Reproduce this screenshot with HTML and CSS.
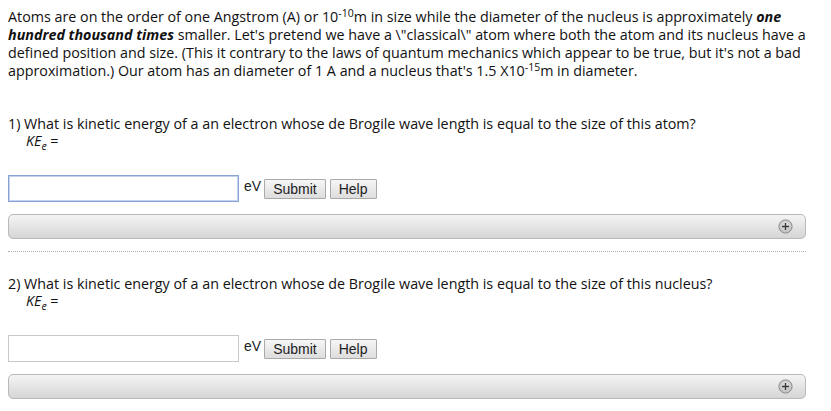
FILE: index.html
```html
<!DOCTYPE html>
<html>
<head>
<meta charset="utf-8">
<link rel="stylesheet" href="styles.css">
</head>
<body>
<div class="page">
  <p class="intro">Atoms are on the order of one Angstrom (A) or 10<sup>-10</sup>m in size while the diameter of the nucleus is approximately <b><i>one hundred thousand times</i></b> smaller. Let's pretend we have a \"classical\" atom where both the atom and its nucleus have a defined position and size. (This it contrary to the laws of quantum mechanics which appear to be true, but it's not a bad approximation.) Our atom has an diameter of 1 A and a nucleus that's 1.5 X10<sup>-15</sup>m in diameter.</p>

  <div class="question q1">
    <div class="qtext">1) What is kinetic energy of a an electron whose de Brogile wave length is equal to the size of this atom?</div>
    <div class="var"><i>KE<sub>e</sub></i> =</div>
    <div class="answer">
      <input class="field focused" type="text">
      <span class="unit">eV</span>
      <button class="btn">Submit</button>
      <button class="btn">Help</button>
    </div>
    <div class="bar"><span class="plus"><svg width="15" height="15" viewBox="0 0 15 15"><defs><radialGradient id="g1" cx="50%" cy="40%" r="60%"><stop offset="0" stop-color="#e6e6e6"/><stop offset="1" stop-color="#bdbdbd"/></radialGradient></defs><circle cx="7.5" cy="7.5" r="6.6" fill="url(#g1)" stroke="#8c8c8c" stroke-width="1"/><path d="M7.5 4V11M4 7.5H11" stroke="#3a3a3a" stroke-width="1.4"/></svg></span></div>
  </div>

  <div class="sep"></div>

  <div class="question q2">
    <div class="qtext">2) What is kinetic energy of a an electron whose de Brogile wave length is equal to the size of this nucleus?</div>
    <div class="var"><i>KE<sub>e</sub></i> =</div>
    <div class="answer">
      <input class="field" type="text">
      <span class="unit">eV</span>
      <button class="btn">Submit</button>
      <button class="btn">Help</button>
    </div>
    <div class="bar"><span class="plus"><svg width="15" height="15" viewBox="0 0 15 15"><defs><radialGradient id="g2" cx="50%" cy="40%" r="60%"><stop offset="0" stop-color="#e6e6e6"/><stop offset="1" stop-color="#bdbdbd"/></radialGradient></defs><circle cx="7.5" cy="7.5" r="6.6" fill="url(#g2)" stroke="#8c8c8c" stroke-width="1"/><path d="M7.5 4V11M4 7.5H11" stroke="#3a3a3a" stroke-width="1.4"/></svg></span></div>
  </div>
</div>
</body>
</html>
```

FILE: styles.css
```css
html, body {
  margin: 0;
  padding: 0;
  background: #fff;
}
.page {
  padding: 8px 25px 0 8px;
  font-family: "Open Sans", sans-serif;
  font-size: 14.3px;
  color: #111;
}
.intro {
  margin: 0;
  line-height: 18px;
}
.intro sup {
  font-size: 10.5px;
  line-height: 0;
  vertical-align: 5px;
}
.q1 {
  padding-top: 35px;
}
.q2 {
  padding-top: 23px;
}
.qtext {
  line-height: 17px;
}
.var {
  padding-left: 18px;
  line-height: 17px;
}
.var sub {
  font-size: 10.5px;
  line-height: 0;
}
.answer {
  margin-top: 26px;
  display: flex;
  align-items: center;
  gap: 4px;
  height: 27px;
}
.field {
  box-sizing: border-box;
  width: 231px;
  height: 27px;
  margin: 0;
  border: 1px solid #c8c8c8;
  outline: none;
  padding: 0 4px;
  font-size: 13px;
}
.field.focused {
  border-color: #8aa3d3;
  box-shadow: inset 0 0 0 1px #c3d2ee;
}
.unit {
  font-family: "Liberation Sans", Arial, sans-serif;
  font-size: 14px;
  margin-left: 1px;
  margin-right: -1px;
  margin-top: -5px;
  color: #222;
}
.btn {
  font-family: "Liberation Sans", Arial, sans-serif;
  font-size: 14px;
  height: 20px;
  padding: 0 8px;
  margin: 0;
  background: linear-gradient(#f6f6f6, #dddddd);
  border: 1px solid #aaaaaa;
  border-radius: 1px;
  color: #222;
  line-height: 18px;
}
.bar {
  margin-top: 12px;
  box-sizing: border-box;
  height: 25px;
  border: 1px solid #b9b9b9;
  border-radius: 5px;
  background: linear-gradient(#f4f4f4, #d5d5d5);
  display: flex;
  align-items: center;
  justify-content: flex-end;
  padding-right: 12px;
}
.plus {
  display: flex;
}
.sep {
  margin-top: 12px;
  border-top: 1px dotted #b0b0b0;
}
```
